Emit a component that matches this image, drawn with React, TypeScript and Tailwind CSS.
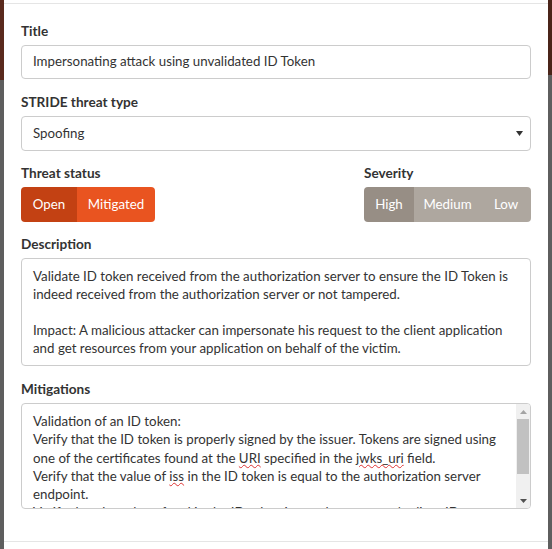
const FONT = "font-['Lato','Open_Sans',sans-serif]";

function Label({ children, className = "" }: { children: React.ReactNode; className?: string }) {
  return <div className={`text-[13.6px] font-bold leading-5 text-[#333] ${className}`}>{children}</div>;
}

const squiggle = "underline decoration-wavy decoration-[#d33] decoration-1 underline-offset-[1px]";

export default function App() {
  return (
    <div className={`flex h-[549px] w-[552px] overflow-hidden bg-white ${FONT}`}>
      <div className="w-[4px] shrink-0 bg-[linear-gradient(to_bottom,#5a2a1d_0,#5a2a1d_80px,#5e5e5e_80px)]" />
      <div className="flex flex-1 flex-col">
        <div className="mt-[3px] border-t border-[#e5e5e5]" />
        <div className="flex-1 px-[17px] pt-[17px]">
          <Label>Title</Label>
          <div className="mt-1 flex h-[34px] items-center rounded-[4px] border border-[#ccc] px-[11px] text-[13.3px] text-[#333]">
            Impersonating attack using unvalidated ID Token
          </div>

          <Label className="mt-[13px]">STRIDE threat type</Label>
          <div className="mt-1 flex h-[35px] items-center justify-between rounded-[4px] border border-[#ccc] pl-[11px] pr-[7px] text-[13.3px] text-[#333]">
            <span>Spoofing</span>
            <svg width="7" height="5" viewBox="0 0 7 5">
              <path d="M0 0h7L3.5 5z" fill="#333" />
            </svg>
          </div>

          <div className="mt-[12px] flex justify-between">
            <div>
              <Label>Threat status</Label>
              <div className="mt-1 flex h-[35px] text-[13.3px] text-white">
                <div className="flex w-[56px] items-center justify-center rounded-l-[4px] bg-[#c34113]">Open</div>
                <div className="flex w-[78px] items-center justify-center rounded-r-[4px] bg-[#e95420]">Mitigated</div>
              </div>
            </div>
            <div className="w-[167px]">
              <Label>Severity</Label>
              <div className="mt-1 flex h-[35px] text-[13.3px] text-white">
                <div className="flex w-[50px] items-center justify-center rounded-l-[4px] bg-[#978e85]">High</div>
                <div className="flex w-[67px] items-center justify-center bg-[#aea79f]">Medium</div>
                <div className="flex w-[50px] items-center justify-center rounded-r-[4px] bg-[#aea79f]">Low</div>
              </div>
            </div>
          </div>

          <Label className="mt-[12px]">Description</Label>
          <div className="mt-1 h-[108px] rounded-[4px] border border-[#ccc] px-[11px] pt-[8px] text-[13.3px] leading-[18px] text-[#333]">
            <p>
              Validate ID token received from the authorization server to ensure the ID Token is indeed received from
              the authorization server or not tampered.
            </p>
            <p className="mt-[18px]">
              Impact: A malicious attacker can impersonate his request to the client application and get resources
              from your application on behalf of the victim.
            </p>
          </div>

          <Label className="mt-[13px]">Mitigations</Label>
          <div className="mt-1 flex h-[106px] overflow-hidden rounded-[4px] border border-[#ccc] text-[13.3px] leading-[18.3px] text-[#333]">
            <div className="flex-1 pl-[11px] pr-[6px] pt-[8px]">
              <p>Validation of an ID token:</p>
              <p>
                Verify that the ID token is properly signed by the issuer. Tokens are signed using one of the
                certificates found at the <span className={squiggle}>URI</span> specified in the{" "}
                <span className={squiggle}>jwks_uri</span> field.
              </p>
              <p>
                Verify that the value of <span className={squiggle}>iss</span> in the ID token is equal to the
                authorization server endpoint.
              </p>
              <p>Verify that the value of aud in the ID token is equal to your app's client ID.</p>
            </div>
            <div className="flex w-[14px] shrink-0 flex-col bg-[#f0f0f0]">
              <div className="flex h-[15px] items-center justify-center">
                <svg width="7" height="4" viewBox="0 0 7 4">
                  <path d="M0 4h7L3.5 0z" fill="#a3a3a3" />
                </svg>
              </div>
              <div className="mx-[1px] h-[55px] bg-[#c1c1c1]" />
              <div className="flex-1" />
              <div className="flex h-[15px] items-center justify-center">
                <svg width="7" height="4" viewBox="0 0 7 4">
                  <path d="M0 0h7L3.5 4z" fill="#505050" />
                </svg>
              </div>
            </div>
          </div>
        </div>
        <div className="mb-[7px] border-t border-[#e5e5e5]" />
      </div>
      <div className="w-[4px] shrink-0 bg-[linear-gradient(to_bottom,#4a2419_0,#4a2419_75px,#5e5e5e_75px)]" />
    </div>
  );
}
